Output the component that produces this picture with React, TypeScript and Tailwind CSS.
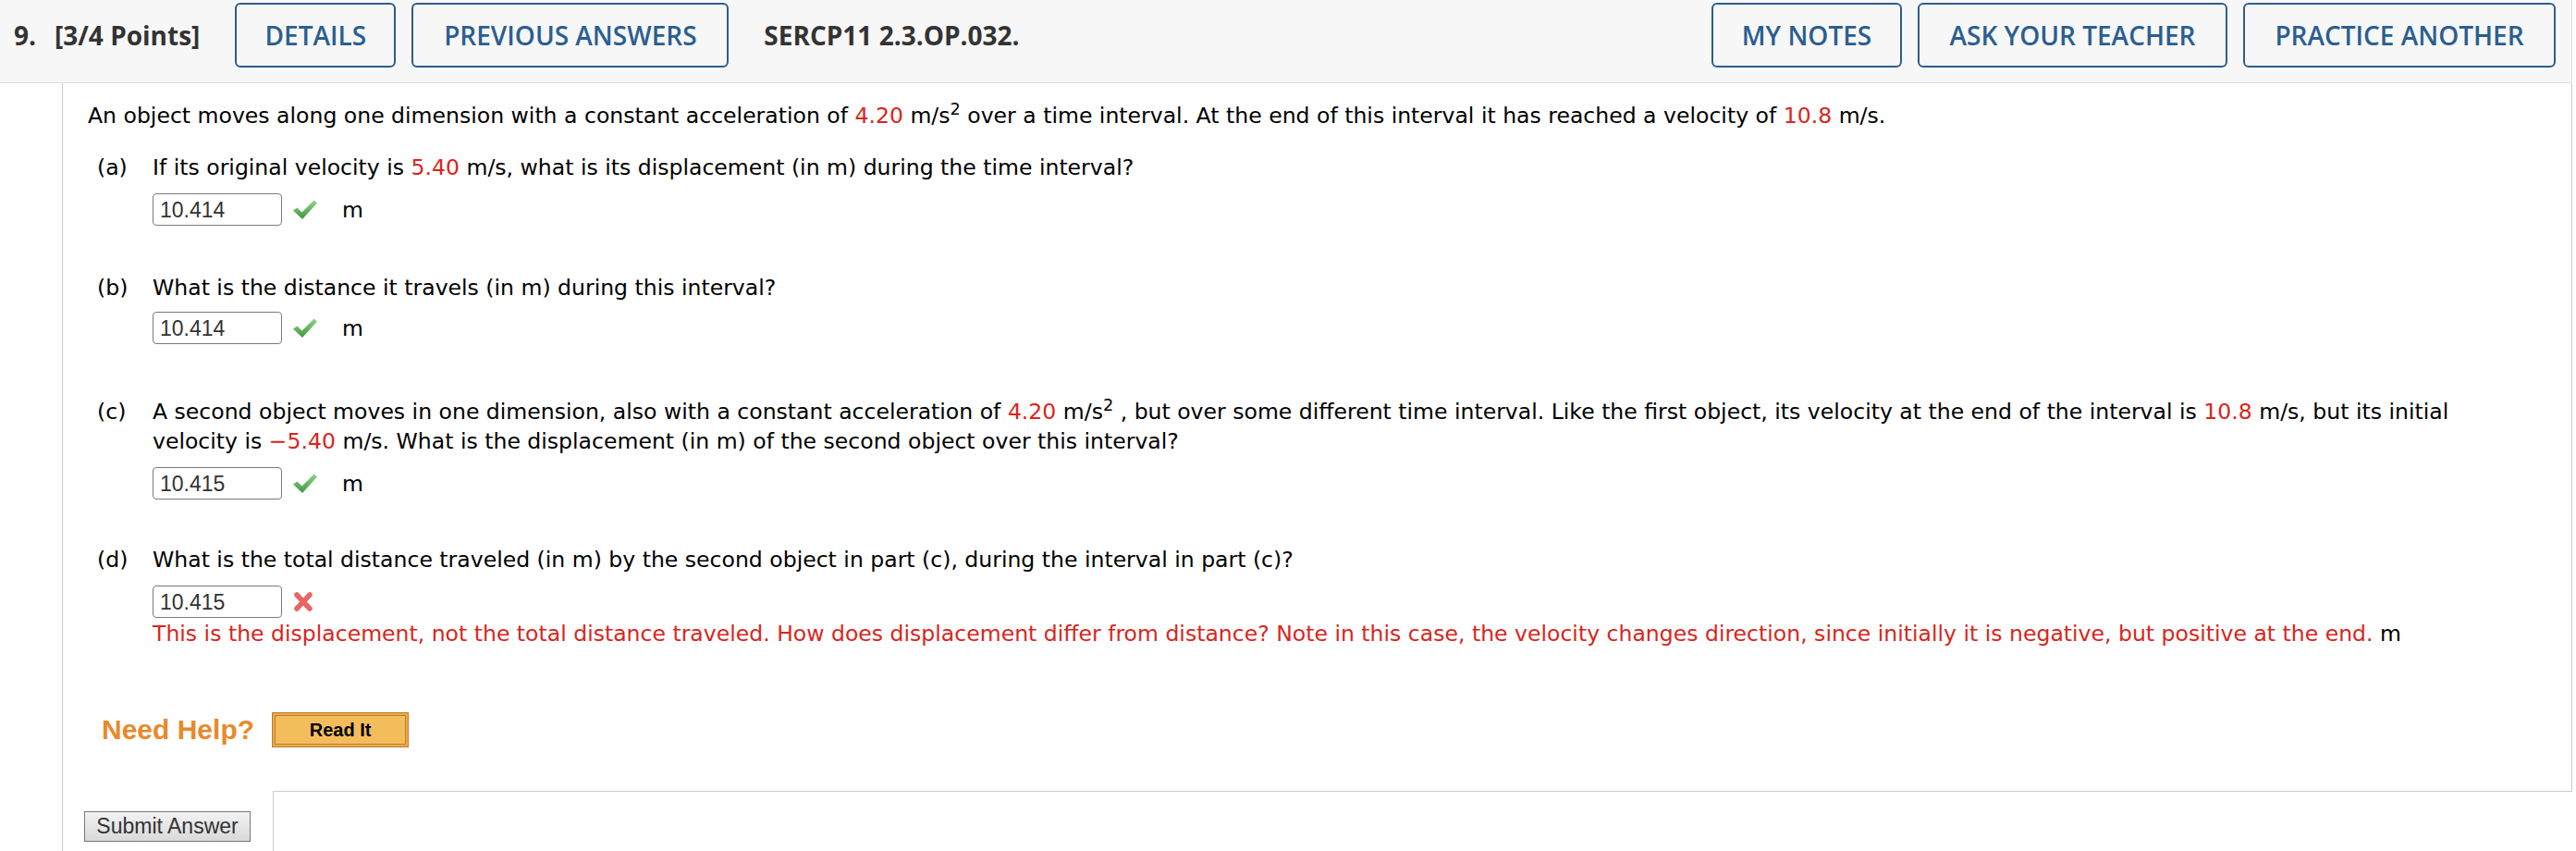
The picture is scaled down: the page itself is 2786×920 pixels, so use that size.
import React from 'react';

/* ─── small drawings ─── */
const Check: React.FC = () => (
  <svg width="28" height="23" viewBox="0 0 28 23" className="ml-[11px] shrink-0">
    <defs>
      <linearGradient id="ck" x1="0" y1="0" x2="0" y2="1">
        <stop offset="0" stopColor="#93d38d" />
        <stop offset="1" stopColor="#3e973b" />
      </linearGradient>
    </defs>
    <path d="M1 12.5 L5.5 9.5 L10.5 14.5 L23.5 1.5 L27 4.5 L11 22 Z" fill="url(#ck)" />
  </svg>
);

const Cross: React.FC = () => (
  <svg width="24" height="23" viewBox="0 0 24 23" className="ml-[11px] shrink-0">
    <g stroke="#e8585a" strokeWidth="5.5" strokeLinecap="round" opacity="0.92">
      <path d="M5 4 L19 19" />
      <path d="M19 4 L5 19" />
    </g>
  </svg>
);

/* ─── answer input ─── */
const AnswerBox: React.FC<{ value: string }> = ({ value }) => (
  <div className="w-[140px] h-[35px] shrink-0 border border-[#7b7b7b] rounded-[4px] bg-white flex items-center pl-[7px] font-['Liberation_Sans',Arial,sans-serif] text-[23px] text-[#333333]">
    {value}
  </div>
);

const Red: React.FC<{ children: React.ReactNode }> = ({ children }) => (
  <span className="text-[#d9251c]">{children}</span>
);

/* ─── one lettered part ─── */
interface PartProps {
  label: string;
  className?: string;
  children: React.ReactNode;
}
const Part: React.FC<PartProps> = ({ label, className = '', children }) => (
  <div className={`flex ${className}`}>
    <div className="w-[60px] shrink-0">{label}</div>
    <div className="flex-1">{children}</div>
  </div>
);

const HeaderButton: React.FC<{ label: string; w: string }> = ({ label, w }) => (
  <div
    className={`${w} h-[70px] shrink-0 border-2 border-[#2b5e91] rounded-[6px] flex items-center justify-center text-[28px] font-semibold text-[#2b5e91]`}
  >
    {label}
  </div>
);

export default function App() {
  return (
    <div className="w-[2786px] h-[920px] bg-white overflow-hidden">
      <div className="w-[2782px]">
        {/* ─── Header ─── */}
        <div className="h-[90px] bg-[#f7f7f7] border-b border-r border-[#dddddd] flex items-start pt-[3px] pl-[15px] pr-[17px] font-['Open_Sans',sans-serif] text-[#333333]">
          <div className="h-[70px] flex items-center text-[28px] font-bold">
            <span>9.</span>
            <span className="ml-[20px]">[3/4 Points]</span>
          </div>
          <div className="ml-[38px] flex gap-[17px]">
            <HeaderButton label="DETAILS" w="w-[174px]" />
            <HeaderButton label="PREVIOUS ANSWERS" w="w-[343px]" />
          </div>
          <div className="ml-[38px] h-[70px] flex items-center text-[28px] font-bold">
            SERCP11 2.3.OP.032.
          </div>
          <div className="ml-auto flex gap-[17px]">
            <HeaderButton label="MY NOTES" w="w-[206px]" />
            <HeaderButton label="ASK YOUR TEACHER" w="w-[335px]" />
            <HeaderButton label="PRACTICE ANOTHER" w="w-[338px]" />
          </div>
        </div>

        {/* ─── Body ─── */}
        <div className="ml-[67px] border-l border-[#cccccc]">
          <div className="border-r border-[#cccccc] pt-[19px] pb-[47px] font-['DejaVu_Sans',Verdana,sans-serif] text-[23.55px] leading-[32px] text-black">
            <p className="pl-[27px] whitespace-nowrap">
              An object moves along one dimension with a constant acceleration of <Red>4.20</Red> m/s<sup>2</sup> over a
              time interval. At the end of this interval it has reached a velocity of <Red>10.8</Red> m/s.
            </p>

            <div className="pl-[37px]">
              <Part label="(a)" className="mt-[24px]">
                <div className="whitespace-nowrap">
                  If its original velocity is <Red>5.40</Red> m/s, what is its displacement (in m) during the time
                  interval?
                </div>
                <div className="mt-[12px] flex items-center">
                  <AnswerBox value="10.414" />
                  <Check />
                  <span className="ml-[26px]">m</span>
                </div>
              </Part>

              <Part label="(b)" className="mt-[51px]">
                <div className="whitespace-nowrap">What is the distance it travels (in m) during this interval?</div>
                <div className="mt-[10px] flex items-center">
                  <AnswerBox value="10.414" />
                  <Check />
                  <span className="ml-[26px]">m</span>
                </div>
              </Part>

              <Part label="(c)" className="mt-[57px]">
                <div className="whitespace-nowrap">
                  A second object moves in one dimension, also with a constant acceleration of <Red>4.20</Red> m/s
                  <sup>2</sup> , but over some different time interval. Like the first object, its velocity at the end
                  of the interval is <Red>10.8</Red> m/s, but its initial
                  <br />
                  velocity is <Red>−5.40</Red> m/s. What is the displacement (in m) of the second object over this
                  interval?
                </div>
                <div className="mt-[12px] flex items-center">
                  <AnswerBox value="10.415" />
                  <Check />
                  <span className="ml-[26px]">m</span>
                </div>
              </Part>

              <Part label="(d)" className="mt-[49px]">
                <div className="whitespace-nowrap">
                  What is the total distance traveled (in m) by the second object in part (c), during the interval in
                  part (c)?
                </div>
                <div className="mt-[12px] flex items-center">
                  <AnswerBox value="10.415" />
                  <Cross />
                </div>
                <div className="mt-[1px] whitespace-nowrap">
                  <Red>
                    This is the displacement, not the total distance traveled. How does displacement differ from
                    distance? Note in this case, the velocity changes direction, since initially it is negative, but
                    positive at the end.
                  </Red>{' '}
                  m
                </div>
              </Part>
            </div>

            {/* ─── Need help ─── */}
            <div className="mt-[69px] pl-[42px] flex items-center">
              <span className="font-['Liberation_Sans',Arial,sans-serif] text-[30px] font-bold text-[#e8892b] leading-none">
                Need Help?
              </span>
              <div className="ml-[19px] w-[148px] h-[38px] border border-[#c07a2a] bg-[#eea948] p-[2px]">
                <div className="w-full h-full border border-[#b7803c] bg-[#f4bd5c] flex items-center justify-center font-['Liberation_Sans',Arial,sans-serif] text-[20px] font-bold text-black">
                  Read It
                </div>
              </div>
            </div>
          </div>

          {/* ─── Bottom row ─── */}
          <div className="flex h-[65px]">
            <div className="w-[227px] shrink-0 pt-[22px] pl-[23px]">
              <div className="w-[180px] h-[33px] border border-[#777777] bg-gradient-to-b from-[#f2f2f2] to-[#d9d9d9] flex items-center justify-center font-['Liberation_Sans',Arial,sans-serif] text-[23px] text-[#333333]">
                Submit Answer
              </div>
            </div>
            <div className="flex-1 border-t border-l border-[#cccccc]" />
          </div>
        </div>
      </div>
    </div>
  );
}
